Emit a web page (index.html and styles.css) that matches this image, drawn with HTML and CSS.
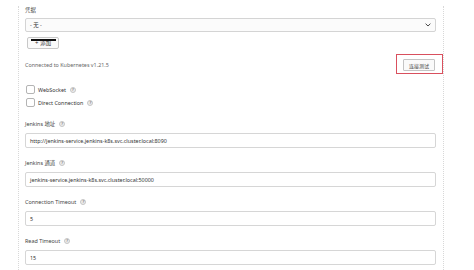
FILE: index.html
```html
<!DOCTYPE html>
<html>
<head>
<meta charset="utf-8">
<link rel="stylesheet" href="styles.css">
</head>
<body>
<div class="panel">
  <div class="label first">凭据</div>
  <div class="select">
    <span>- 无 -</span>
    <svg class="chev" width="6" height="4" viewBox="0 0 6 4"><path d="M0.6 0.7 L3 3 L5.4 0.7" fill="none" stroke="#333" stroke-width="0.9"/></svg>
  </div>
  <div class="addrow"><button class="add"><span class="plus">+</span> 添加</button></div>
  <div class="conn">
    <span class="conntext">Connected to Kubernetes v1.21.5</span>
    <span class="testwrap"><button class="test">连接测试</button><span class="mark"></span></span>
  </div>
  <div class="check"><span class="box"></span><span>WebSocket</span><span class="help">?</span></div>
  <div class="check"><span class="box"></span><span>Direct Connection</span><span class="help">?</span></div>
  <div class="label">Jenkins 地址 <span class="help">?</span></div>
  <div class="input">http://jenkins-service.jenkins-k8s.svc.cluster.local:8090</div>
  <div class="label">Jenkins 通道 <span class="help">?</span></div>
  <div class="input">jenkins-service.jenkins-k8s.svc.cluster.local:50000</div>
  <div class="label">Connection Timeout <span class="help">?</span></div>
  <div class="input">5</div>
  <div class="label">Read Timeout <span class="help">?</span></div>
  <div class="input">15</div>
</div>
</body>
</html>
```
FILE: styles.css
```css
* { box-sizing: border-box; }
html, body { margin: 0; padding: 0; background: #fff; }
body {
  font-family: "Noto Sans", "Noto Sans CJK SC", sans-serif;
  font-size: 5.4px;
  color: #333;
  width: 474px;
  height: 270px;
  overflow: hidden;
}
.panel {
  margin-left: 18px;
  width: 426px;
  border-left: 1px dotted #d8d8d8;
  border-right: 1px dotted #d8d8d8;
  padding: 0 7px 10px 6px;
  min-height: 270px;
}
.label {
  line-height: 8px;
  height: 8px;
  margin-top: 11px;
  display: flex;
  align-items: center;
  gap: 3px;
  color: #444;
}
.label.first { margin-top: 6px; }
.select {
  margin-top: 4px;
  height: 14px;
  border: 1px solid #d4d4d4;
  border-radius: 2px;
  background: #fbfbfb;
  display: flex;
  align-items: center;
  justify-content: space-between;
  padding: 0 4px 0 4px;
}
.chev { display: block; }
.addrow { margin-top: 5px; height: 12px; padding-left: 2px; }
.add {
  position: relative;
  height: 12px;
  width: 32px;
  border: 1px solid #c8c8c8;
  border-radius: 2px;
  background: #fafafa;
  font: inherit;
  color: #333;
  padding: 0;
  display: flex;
  align-items: center;
  justify-content: center;
  gap: 2px;
}
.add::before {
  content: "";
  position: absolute;
  left: 3px; right: 2px; top: 1px;
  height: 2px;
  background: #111;
}
.plus { font-size: 6px; }
.conn {
  margin-top: 10px;
  height: 12px;
  display: flex;
  align-items: center;
  justify-content: space-between;
}
.conntext { color: #666; }
.testwrap { position: relative; display: block; height: 12px; margin-right: 1px; }
.test {
  height: 12px;
  width: 32px;
  border: 1px solid #c4c4c4;
  border-radius: 1px;
  background: #fafafa;
  font: inherit;
  font-size: 5px;
  color: #444;
  padding: 0;
}
.mark {
  position: absolute;
  left: -7px; right: -8px; top: -5px; bottom: -3px;
  border: 1px solid #d9505e;
}
.check {
  display: flex;
  align-items: center;
  gap: 3px;
  height: 9px;
  margin-top: 4px;
  padding-left: 1px;
}
.conn + .check { margin-top: 14px; }
.box {
  width: 9px; height: 9px;
  border: 1px solid #b4b4b4;
  border-radius: 2px;
  background: #fff;
}
.help {
  display: inline-flex;
  align-items: center;
  justify-content: center;
  width: 6px; height: 6px;
  border-radius: 50%;
  background: #ececec;
  border: 0.5px solid #c6c6c6;
  color: #555;
  font-size: 4.2px;
  line-height: 6px;
  margin-left: 1px;
}
.check + .label { margin-top: 13px; }
.input {
  margin-top: 5px;
  height: 15px;
  border: 1px solid #d6d6d6;
  border-radius: 2px;
  display: flex;
  align-items: center;
  padding-left: 4px;
  color: #333;
}
```
